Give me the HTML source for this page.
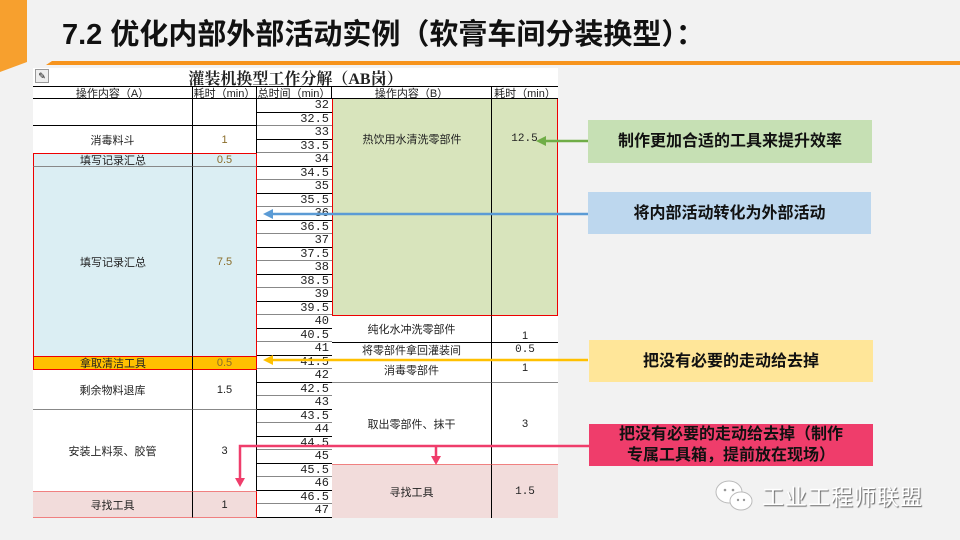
<!DOCTYPE html>
<html><head><meta charset="utf-8"><style>
*{margin:0;padding:0;box-sizing:border-box}
body{width:960px;height:540px;background:#f2f2f2;position:relative;overflow:hidden;font-family:"Liberation Sans","Noto Sans CJK SC",sans-serif}
.a{position:absolute}
.c{position:absolute;display:flex;align-items:center;justify-content:center;font-size:11px;color:#222;font-family:"Liberation Sans","Noto Sans CJK SC",sans-serif}
.t{position:absolute;left:257px;width:75px;height:13.5px;border-bottom:1px solid #000;font-family:"Liberation Mono","Noto Sans CJK SC",monospace;font-size:12px;text-align:right;padding-right:3px;line-height:13px;color:#222;background:#fff}
.t.g{border-bottom-color:#888}
.box{position:absolute;display:flex;align-items:center;justify-content:center;font-weight:bold;font-size:16px;color:#111;text-align:center;line-height:21px;font-family:"Liberation Sans","Noto Sans CJK SC",sans-serif}
</style></head><body>
<svg class="a" style="left:0;top:0" width="960" height="80">
<polygon points="0,0 27,0 27,62 0,72" fill="#f7a02e"/>
<polygon points="52,61 960,61 960,65 46,65" fill="#f7941d"/>
</svg>
<div class="a" style="left:62px;top:16px;font-size:29px;font-weight:bold;color:#111;font-family:'Liberation Sans','Noto Sans CJK SC',sans-serif;line-height:38px">7.2 优化内部外部活动实例（软膏车间分装换型）：</div>

<!-- table -->
<div class="a" style="left:33px;top:68px;width:525px;height:450px;background:#fff"></div>
<div class="c" style="left:33px;top:68px;width:525px;height:19px;font-size:16px;font-weight:bold;font-family:'Liberation Serif','Noto Serif CJK SC',serif;border-bottom:1px solid #000">灌装机换型工作分解（AB岗）</div>
<div class="a" style="left:35px;top:69px;width:14px;height:14px;border:1px solid #999;background:#eee;font-size:9px;text-align:center;line-height:12px">✎</div>
<div class="c" style="left:33px;top:87px;width:160px;height:12px;border-bottom:1px solid #000;border-right:1px solid #000">操作内容（A）</div>
<div class="c" style="left:193px;top:87px;width:64px;height:12px;border-bottom:1px solid #000;border-right:1px solid #000">耗时（min）</div>
<div class="c" style="left:257px;top:87px;width:75px;height:12px;border-bottom:1px solid #000;border-right:1px solid #000">总时间（min）</div>
<div class="c" style="left:332px;top:87px;width:160px;height:12px;border-bottom:1px solid #000;border-right:1px solid #000">操作内容（B）</div>
<div class="c" style="left:492px;top:87px;width:66px;height:12px;border-bottom:1px solid #000">耗时（min）</div>

<!-- A column -->
<div class="c" style="left:33px;top:99px;width:160px;height:27px;border-bottom:1px solid #000;border-right:1px solid #000"></div>
<div class="c" style="left:193px;top:99px;width:64px;height:27px;border-bottom:1px solid #000;border-right:1px solid #000"></div>
<div class="c" style="left:33px;top:126px;width:160px;height:27px;border-right:1px solid #000">消毒料斗</div>
<div class="c" style="left:193px;top:126px;width:64px;height:27px;border-right:1px solid #000;color:#8a6d2a">1</div>
<div class="c" style="left:33px;top:153px;width:160px;height:14px;background:#dbeef3;border:1px solid #e00;border-right:1px solid #000;border-bottom:1px solid #888">填写记录汇总</div>
<div class="c" style="left:193px;top:153px;width:64px;height:14px;background:#dbeef3;border-top:1px solid #e00;border-right:1px solid #e00;border-bottom:1px solid #888;color:#8a6d2a">0.5</div>
<div class="c" style="left:33px;top:167px;width:160px;height:189px;background:#dbeef3;border-left:1px solid #e00;border-right:1px solid #000">填写记录汇总</div>
<div class="c" style="left:193px;top:167px;width:64px;height:189px;background:#dbeef3;border-right:1px solid #e00;color:#8a6d2a">7.5</div>
<div class="c" style="left:33px;top:356px;width:160px;height:14px;background:#ffc000;border:1px solid #e00;border-right:1px solid #000">拿取清洁工具</div>
<div class="c" style="left:193px;top:356px;width:64px;height:14px;background:#ffc000;border-top:1px solid #e00;border-bottom:1px solid #e00;border-right:1px solid #e00;color:#8a6d2a">0.5</div>
<div class="c" style="left:33px;top:370px;width:160px;height:40px;border-right:1px solid #000;border-bottom:1px solid #888">剩余物料退库</div>
<div class="c" style="left:193px;top:370px;width:64px;height:40px;border-right:1px solid #000;border-bottom:1px solid #888">1.5</div>
<div class="c" style="left:33px;top:410px;width:160px;height:81px;border-right:1px solid #000">安装上料泵、胶管</div>
<div class="c" style="left:193px;top:410px;width:64px;height:81px;border-right:1px solid #000">3</div>
<div class="c" style="left:33px;top:491px;width:160px;height:27px;background:#f2dcdb;border-top:1px solid #f08080;border-right:1px solid #000;border-bottom:1px solid #f08080">寻找工具</div>
<div class="c" style="left:193px;top:491px;width:64px;height:27px;background:#f2dcdb;border-top:1px solid #f08080;border-right:1px solid #e00;border-bottom:1px solid #f08080">1</div>

<!-- total column -->
<div class="t" style="top:99px">32</div><div class="t g" style="top:112.5px">32.5</div>
<div class="t" style="top:126px">33</div><div class="t g" style="top:139.5px">33.5</div>
<div class="t" style="top:153px">34</div><div class="t g" style="top:166.5px">34.5</div>
<div class="t" style="top:180px">35</div><div class="t g" style="top:193.5px">35.5</div>
<div class="t" style="top:207px">36</div><div class="t g" style="top:220.5px">36.5</div>
<div class="t" style="top:234px">37</div><div class="t g" style="top:247.5px">37.5</div>
<div class="t" style="top:261px">38</div><div class="t g" style="top:274.5px">38.5</div>
<div class="t" style="top:288px">39</div><div class="t g" style="top:301.5px">39.5</div>
<div class="t" style="top:315px">40</div><div class="t g" style="top:328.5px">40.5</div>
<div class="t" style="top:342px">41</div><div class="t g" style="top:355.5px">41.5</div>
<div class="t" style="top:369px">42</div><div class="t g" style="top:382.5px">42.5</div>
<div class="t" style="top:396px">43</div><div class="t g" style="top:409.5px">43.5</div>
<div class="t" style="top:423px">44</div><div class="t g" style="top:436.5px">44.5</div>
<div class="t" style="top:450px">45</div><div class="t g" style="top:463.5px">45.5</div>
<div class="t" style="top:477px">46</div><div class="t g" style="top:490.5px">46.5</div>
<div class="t" style="top:504px">47</div>

<!-- B column -->
<div class="c" style="left:332px;top:99px;width:160px;height:217px;background:#d8e4bc;border-left:1px solid #e00;border-right:1px solid #000;border-bottom:1px solid #e00;align-items:flex-start;padding-top:32px">热饮用水清洗零部件</div>
<div class="c" style="left:492px;top:99px;width:66px;height:217px;background:#d8e4bc;border-right:1px solid #e00;border-bottom:1px solid #e00;font-family:'Liberation Mono',monospace;align-items:flex-start;padding-top:34px">12.5</div>
<div class="c" style="left:332px;top:316px;width:160px;height:27px;border-right:1px solid #000;border-bottom:1px solid #000">纯化水冲洗零部件</div>
<div class="c" style="left:492px;top:316px;width:66px;height:27px;border-bottom:1px solid #000;align-items:flex-end">1</div>
<div class="c" style="left:332px;top:343px;width:160px;height:13px;border-right:1px solid #000">将零部件拿回灌装间</div>
<div class="c" style="left:492px;top:343px;width:66px;height:13px;font-family:'Liberation Mono',monospace">0.5</div>
<div class="c" style="left:332px;top:356px;width:160px;height:27px;border-right:1px solid #000;border-bottom:1px solid #888;align-items:flex-start;padding-top:6px">消毒零部件</div>
<div class="c" style="left:492px;top:356px;width:66px;height:27px;border-bottom:1px solid #888;align-items:flex-start;padding-top:6px">1</div>
<div class="c" style="left:332px;top:383px;width:160px;height:81px;border-right:1px solid #000">取出零部件、抹干</div>
<div class="c" style="left:492px;top:383px;width:66px;height:81px">3</div>
<div class="c" style="left:332px;top:464px;width:160px;height:54px;background:#f2dcdb;border-top:1px solid #f08080;border-right:1px solid #000">寻找工具</div>
<div class="c" style="left:492px;top:464px;width:66px;height:54px;background:#f2dcdb;border-top:1px solid #f08080;font-family:'Liberation Mono',monospace">1.5</div>

<!-- arrows -->
<svg class="a" style="left:0;top:0" width="960" height="540">
<line x1="588" y1="141" x2="542" y2="141" stroke="#70ad47" stroke-width="2.5"/><polygon points="536,141 546,136 546,146" fill="#70ad47"/>
<line x1="588" y1="214" x2="270" y2="214" stroke="#5b9bd5" stroke-width="2.5"/><polygon points="263,214 273,209 273,219" fill="#5b9bd5"/>
<line x1="588" y1="360" x2="270" y2="360" stroke="#ffc000" stroke-width="2.5"/><polygon points="263,360 273,355 273,365" fill="#ffc000"/>
<polyline points="589,446 240,446 240,480" fill="none" stroke="#ef3d6b" stroke-width="2.5"/><polygon points="240,487 235,478 245,478" fill="#ef3d6b"/>
<line x1="436" y1="446" x2="436" y2="458" stroke="#ef3d6b" stroke-width="2.5"/><polygon points="436,465 431,456 441,456" fill="#ef3d6b"/>
</svg>

<div class="box" style="left:588px;top:120px;width:284px;height:43px;background:#c6e0b4">制作更加合适的工具来提升效率</div>
<div class="box" style="left:588px;top:192px;width:283px;height:42px;background:#bdd7ee">将内部活动转化为外部活动</div>
<div class="box" style="left:589px;top:340px;width:284px;height:42px;background:#ffe699">把没有必要的走动给去掉</div>
<div class="box" style="left:589px;top:424px;width:284px;height:42px;background:#ef3d6b">把没有必要的走动给去掉（制作<br>专属工具箱，提前放在现场）</div>

<!-- logo -->
<svg class="a" style="left:714px;top:478px" width="45" height="36">
<ellipse cx="15" cy="14" rx="13" ry="11" fill="#fff" stroke="#bbb"/>
<ellipse cx="27" cy="23" rx="11" ry="9" fill="#fff" stroke="#bbb"/>
<circle cx="11" cy="12" r="1.3" fill="#999"/><circle cx="19" cy="12" r="1.3" fill="#999"/>
<circle cx="24" cy="22" r="1.2" fill="#999"/><circle cx="30" cy="22" r="1.2" fill="#999"/>
</svg>
<div class="a" style="left:762px;top:480px;font-size:22px;color:#fff;text-shadow:1px 1px 1px #666;font-family:'Liberation Sans','Noto Sans CJK SC',sans-serif;letter-spacing:1px">工业工程师联盟</div>
</body></html>
